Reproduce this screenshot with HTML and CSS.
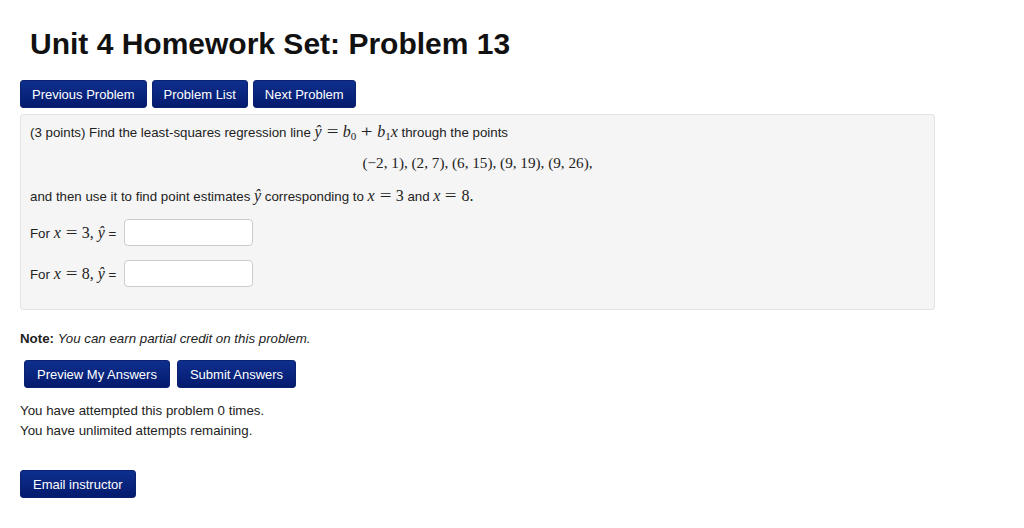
FILE: index.html
```html
<!DOCTYPE html>
<html lang="en">
<head>
    <meta charset="UTF-8">
    <title>Unit 4 Homework Set: Problem 13</title>
    <link rel="stylesheet" href="styles.css">
</head>
<body>
    <div class="page">
        <h1>Unit 4 Homework Set: Problem 13</h1>

        <!-- Navigation -->
        <div class="nav">
            <button class="btn">Previous Problem</button>
            <button class="btn">Problem List</button>
            <button class="btn">Next Problem</button>
        </div>

        <!-- Problem -->
        <div class="problem">
            <p>(3 points) Find the least-squares regression line
                <span class="math"><i>ŷ</i><span class="op">=</span><i>b</i><sub>0</sub><span class="op">+</span><i>b</i><sub>1</sub><i>x</i></span>
                through the points</p>
            <div class="display math">(−2, 1), (2, 7), (6, 15), (9, 19), (9, 26),</div>
            <p>and then use it to find point estimates <span class="math"><i>ŷ</i></span>
                corresponding to <span class="math"><i>x</i><span class="op">=</span>3</span> and <span class="math"><i>x</i><span class="op">=</span>8.</span></p>

            <div class="answer">
                <span>For <span class="math"><i>x</i><span class="op">=</span>3, <i>ŷ</i></span> =</span>
                <input type="text">
            </div>
            <div class="answer">
                <span>For <span class="math"><i>x</i><span class="op">=</span>8, <i>ŷ</i></span> =</span>
                <input type="text">
            </div>
        </div>

        <p class="note"><b>Note:</b> <i>You can earn partial credit on this problem.</i></p>

        <div class="submit">
            <button class="btn">Preview My Answers</button>
            <button class="btn">Submit Answers</button>
        </div>

        <p class="attempts">You have attempted this problem 0 times.<br>You have unlimited attempts remaining.</p>

        <button class="btn email">Email instructor</button>
    </div>
</body>
</html>
```

FILE: styles.css
```css
body {
    margin: 0;
    font-family: "Liberation Sans", Arial, sans-serif;
    font-size: 13.3px;
    color: #222;
    background: #fff;
}
.page {
    padding: 0 20px;
}
h1 {
    margin: 0;
    padding: 28px 0 0 10px;
    height: 50px;
    font-size: 30px;
    font-weight: bold;
    color: #111;
    box-sizing: border-box;
    line-height: 32px;
}
.btn {
    font-family: "Liberation Sans", Arial, sans-serif;
    font-size: 13px;
    color: #fff;
    background: linear-gradient(#0e2f8e, #041b6e);
    border: 1px solid #0a2270;
    border-radius: 3px;
    padding: 0 12px;
    height: 28px;
    cursor: pointer;
}
.nav {
    display: flex;
    gap: 5px;
    margin-top: 30px;
}
.nav .btn {
    padding: 0 11px;
}
.problem {
    margin-top: 6px;
    width: 915px;
    height: 196px;
    box-sizing: border-box;
    background: #f5f5f5;
    border: 1px solid #e3e3e3;
    border-radius: 3px;
    padding: 9px 9px;
}
.problem p {
    margin: 0;
    line-height: 16px;
}
.math {
    font-family: "Liberation Serif", "Times New Roman", serif;
    font-size: 16px;
}
.math .op {
    display: inline-block;
    padding: 0 6px;
    transform: scaleX(1.3);
}
.math sub {
    font-size: 11px;
    vertical-align: -3px;
    line-height: 0;
}
.display {
    font-size: 15.2px;
    text-align: center;
    margin: 12px 0 15px;
    line-height: 20px;
}
.answer {
    display: flex;
    align-items: center;
    gap: 8px;
    margin-top: 14px;
}
.answer + .answer {
    margin-top: 14px;
}
.answer input {
    width: 129px;
    height: 27px;
    box-sizing: border-box;
    border: 1px solid #ccc;
    border-radius: 4px;
    background: #fff;
}
.note {
    margin: 21px 0 0;
    line-height: 16px;
}
.submit {
    display: flex;
    gap: 7px;
    margin: 13px 0 0 4px;
}
.attempts {
    margin: 13px 0 0;
    line-height: 20px;
}
.email {
    margin-top: 29px;
}
```
